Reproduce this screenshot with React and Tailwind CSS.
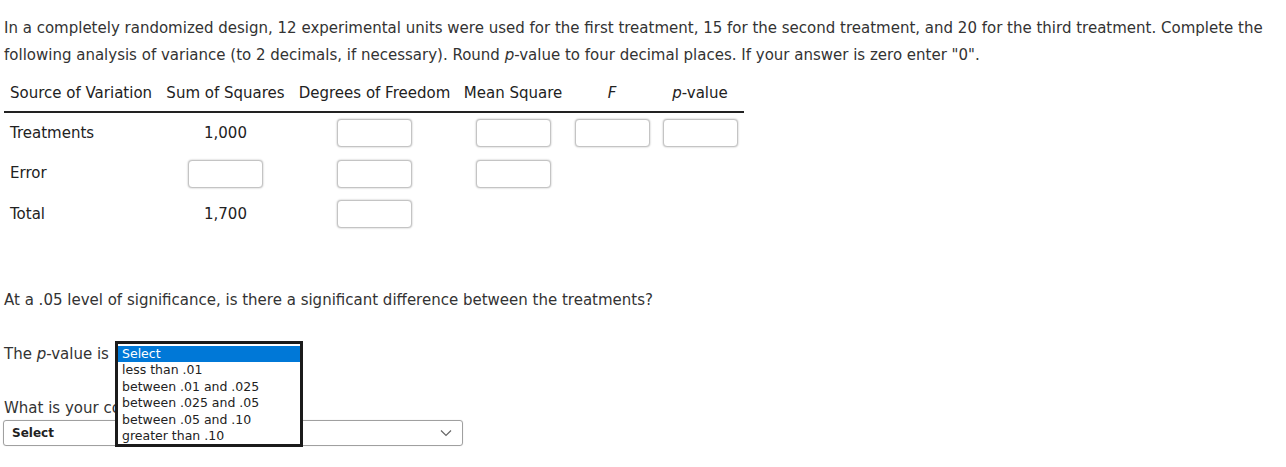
import React from "react";

const font = { fontFamily: '"DejaVu Sans", Verdana, sans-serif' };

function Box() {
  return (
    <div className="mx-auto h-[28px] w-[75px] rounded-[4px] border border-[#c4c4c4] bg-white shadow-[0_0_2px_rgba(0,0,0,0.3)]" />
  );
}

export default function App() {
  return (
    <div className="relative h-[467px] w-[1286px] bg-white text-[#333]" style={font}>
      <div className="pl-[4px] pt-[15px]">
        <p className="text-[15px] leading-[27px] whitespace-nowrap">
          In a completely randomized design, 12 experimental units were used for the first treatment, 15 for the second treatment, and 20 for the third treatment. Complete the
          <br />
          following analysis of variance (to 2 decimals, if necessary). Round <i>p</i>-value to four decimal places. If your answer is zero enter "0".
        </p>

        <table className="mt-[6px] border-collapse text-[15px] text-[#222]">
          <thead>
            <tr className="h-[37px] border-b-2 border-[#222]">
              <th className="w-[156px] px-[6px] text-left font-normal">Source of Variation</th>
              <th className="w-[131px] text-center font-normal">Sum of Squares</th>
              <th className="w-[167px] text-center font-normal">Degrees of Freedom</th>
              <th className="w-[110px] text-center font-normal">Mean Square</th>
              <th className="w-[88px] text-center font-normal italic">F</th>
              <th className="w-[88px] text-center font-normal"><i>p</i>-value</th>
            </tr>
          </thead>
          <tbody>
            <tr className="h-[41px]">
              <td className="px-[6px]">Treatments</td>
              <td className="text-center">1,000</td>
              <td><Box /></td>
              <td><Box /></td>
              <td><Box /></td>
              <td><Box /></td>
            </tr>
            <tr className="h-[41px]">
              <td className="px-[6px]">Error</td>
              <td><Box /></td>
              <td><Box /></td>
              <td><Box /></td>
              <td></td>
              <td></td>
            </tr>
            <tr className="h-[40px]">
              <td className="px-[6px]">Total</td>
              <td className="text-center">1,700</td>
              <td><Box /></td>
              <td></td>
              <td></td>
              <td></td>
            </tr>
          </tbody>
        </table>

        <p className="mt-[53px] text-[15px] leading-[27px]">
          At a .05 level of significance, is there a significant difference between the treatments?
        </p>

        <p className="mt-[27px] text-[15px] leading-[27px]">
          The <i>p</i>-value is
        </p>

        <p className="mt-[28px] text-[15px] leading-[24px]">What is your conclusion?</p>
      </div>

      <div className="ml-[3px] flex h-[26px] w-[460px] items-center justify-between rounded-[3px] border border-[#a0a0a0] pl-[8px] pr-[10px] shadow-[0_0_1px_rgba(0,0,0,0.2)]">
        <span className="text-[12px] font-bold text-[#222]">Select</span>
        <svg width="12" height="8" viewBox="0 0 12 8" fill="none">
          <path d="M1 1.5 L6 6.5 L11 1.5" stroke="#666" strokeWidth="1.2" />
        </svg>
      </div>

      <div className="absolute left-[115px] top-[341px] h-[106px] w-[188px] border-[3px] border-[#1b1b1b] bg-white pt-[2px] text-[12.5px] leading-[16.4px] text-[#222]">
        <div className="bg-[#0078d7] pl-[4px] text-white">Select</div>
        <div className="pl-[4px]">less than .01</div>
        <div className="pl-[4px]">between .01 and .025</div>
        <div className="pl-[4px]">between .025 and .05</div>
        <div className="pl-[4px]">between .05 and .10</div>
        <div className="pl-[4px]">greater than .10</div>
      </div>
    </div>
  );
}
